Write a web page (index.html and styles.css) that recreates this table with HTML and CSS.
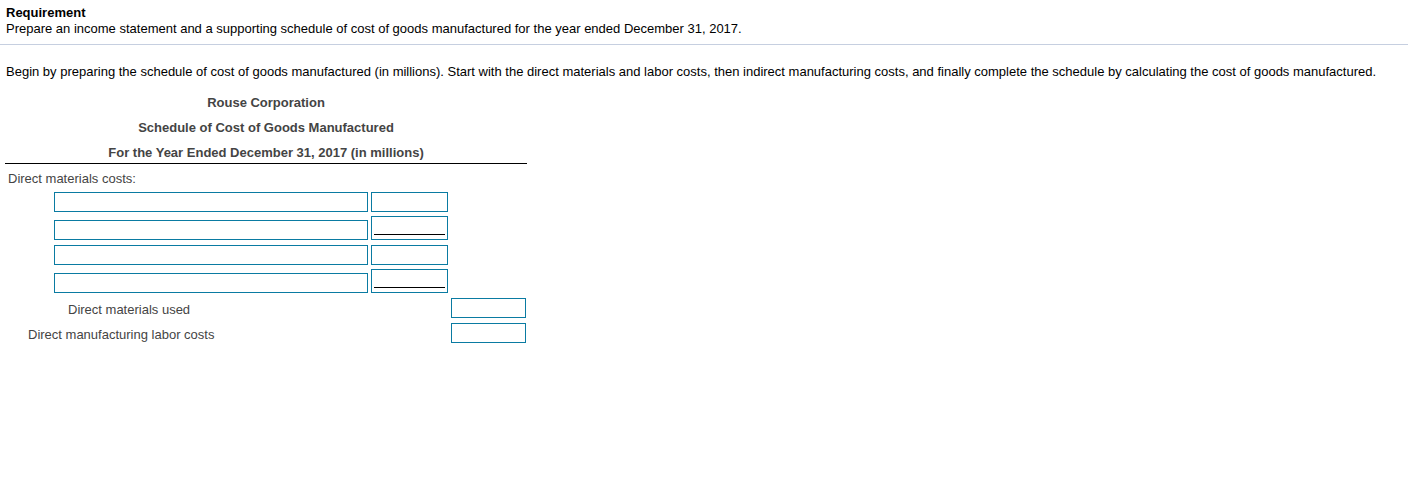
FILE: index.html
```html
<!DOCTYPE html>
<html>
<head>
<meta charset="utf-8">
<link rel="stylesheet" href="styles.css">
</head>
<body>
<div class="req">
  <div class="req-title">Requirement</div>
  <div class="req-text">Prepare an income statement and a supporting schedule of cost of goods manufactured for the year ended December 31, 2017.</div>
</div>
<div class="divider"></div>
<p class="intro">Begin by preparing the schedule of cost of goods manufactured (in millions). Start with the direct materials and labor costs, then indirect manufacturing costs, and finally complete the schedule by calculating the cost of goods manufactured.</p>
<div class="schedule">
  <div class="heading">Rouse Corporation</div>
  <div class="heading">Schedule of Cost of Goods Manufactured</div>
  <div class="heading last">For the Year Ended December 31, 2017 (in millions)</div>
  <div class="label-row">Direct materials costs:</div>
  <div class="row">
    <div class="box wide"></div>
    <div class="box small"></div>
  </div>
  <div class="row tall">
    <div class="box wide"></div>
    <div class="box small ul"><div class="line"></div></div>
  </div>
  <div class="row">
    <div class="box wide"></div>
    <div class="box small"></div>
  </div>
  <div class="row tall">
    <div class="box wide"></div>
    <div class="box small ul"><div class="line"></div></div>
  </div>
  <div class="row total">
    <div class="text indent2">Direct materials used</div>
    <div class="box right"></div>
  </div>
  <div class="row total">
    <div class="text indent1">Direct manufacturing labor costs</div>
    <div class="box right"></div>
  </div>
</div>
</body>
</html>
```

FILE: styles.css
```css
html, body {
  margin: 0;
  padding: 0;
  background: #fff;
}
body {
  font-family: "Liberation Sans", Arial, sans-serif;
  font-size: 13px;
  color: #000;
}
.req {
  padding: 5px 6px 0 6px;
  line-height: 16px;
}
.req-title {
  font-weight: bold;
}
.divider {
  margin-top: 7px;
  height: 1px;
  background: #c6cfe0;
}
.intro {
  margin: 19px 0 0 6px;
  line-height: 16px;
}
.schedule {
  margin: 15px 0 0 5px;
  width: 522px;
  color: #444;
}
.heading {
  text-align: center;
  font-weight: bold;
  height: 25px;
  line-height: 16px;
}
.heading.last {
  height: 18px;
  border-bottom: 1px solid #000;
}
.label-row {
  height: 23px;
  line-height: 16px;
  padding: 7px 0 0 3px;
  box-sizing: border-box;
}
.row {
  display: flex;
  align-items: flex-end;
  height: 25px;
}
.row.tall {
  height: 28px;
}
.box {
  box-sizing: border-box;
  border: 1px solid #0a7ba2;
  height: 20px;
  background: #fff;
}
.wide {
  width: 314px;
  margin-left: 49px;
}
.small {
  width: 77px;
  margin-left: 3px;
}
.small.ul {
  height: 24px;
  padding: 17px 2px 0 2px;
}
.line {
  height: 1px;
  background: #000;
}
.total {
  justify-content: space-between;
}
.text {
  line-height: 16px;
  padding-bottom: 0;
}
.indent2 { margin-left: 63px; }
.indent1 { margin-left: 23px; }
.right {
  width: 75px;
  margin-right: 1px;
}
```
